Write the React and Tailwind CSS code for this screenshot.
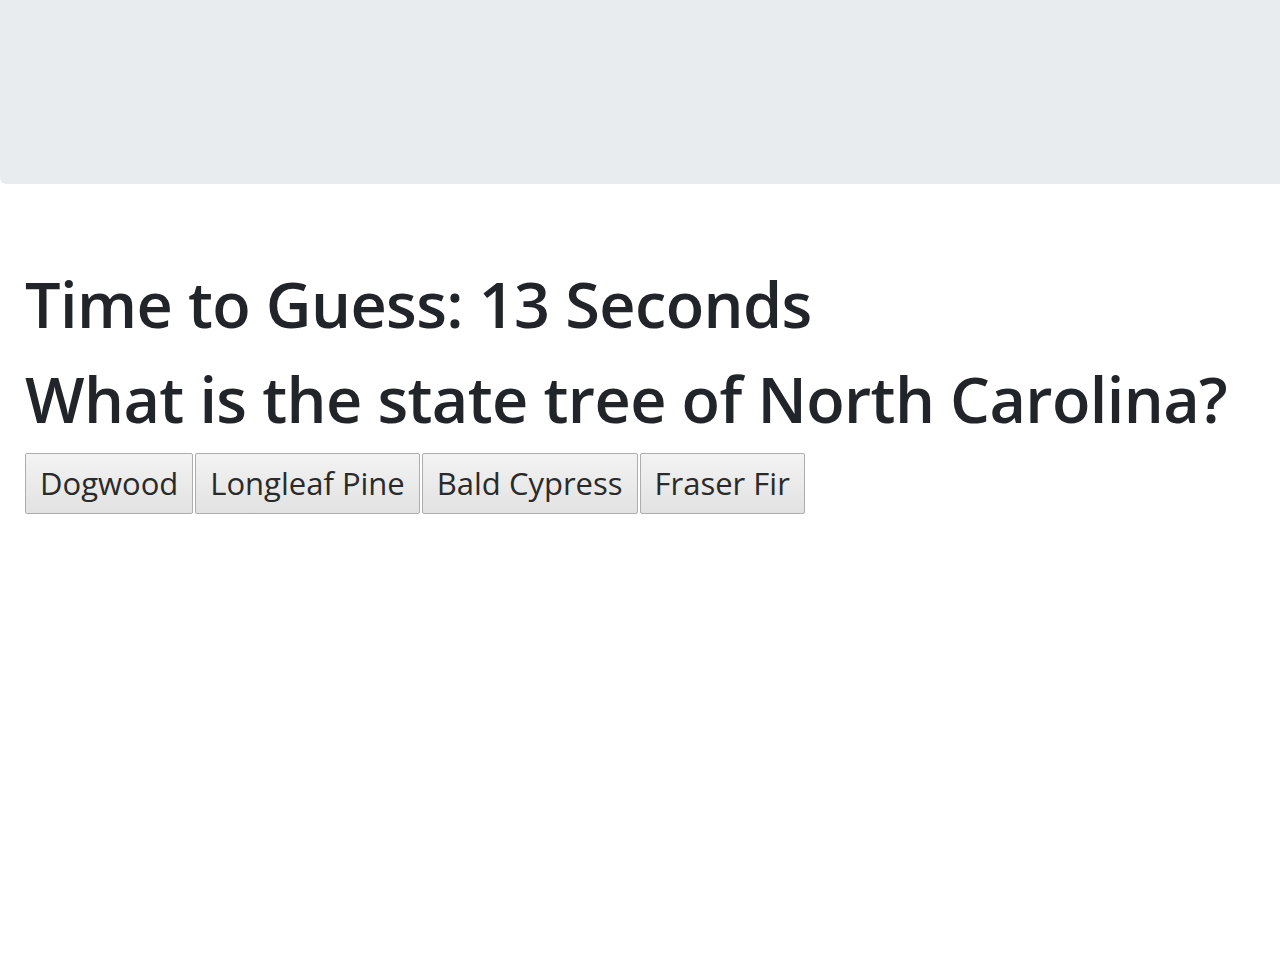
export default function App() {
    const answers = ['Dogwood', 'Longleaf Pine', 'Bald Cypress', 'Fraser Fir'];

    return (
        <div className="min-h-screen bg-white text-[#212529]" style={{ fontFamily: '"Open Sans", sans-serif' }}>
            {/* Jumbotron */}
            <div className="h-[184px] bg-[#e9ecef] rounded-bl-[6px] mb-[82px]" />

            <div className="px-[25px]">
                <h1 className="text-[63px] leading-[1.2] font-semibold tracking-[-0.6px] mb-[19px]">
                    Time to Guess: 13 Seconds
                </h1>
                <h1 className="text-[63px] leading-[1.2] font-semibold tracking-[-0.6px] mb-[17px]">
                    What is the state tree of North Carolina?
                </h1>

                <div className="flex gap-[2px]">
                    {answers.map((a) => (
                        <button
                            key={a}
                            className="h-[61px] px-[14px] text-[31px] text-[#2a2a2a] border border-[#adadad] rounded-[2px] bg-gradient-to-b from-[#f3f3f3] to-[#e2e2e2]"
                        >
                            {a}
                        </button>
                    ))}
                </div>
            </div>
        </div>
    );
}
